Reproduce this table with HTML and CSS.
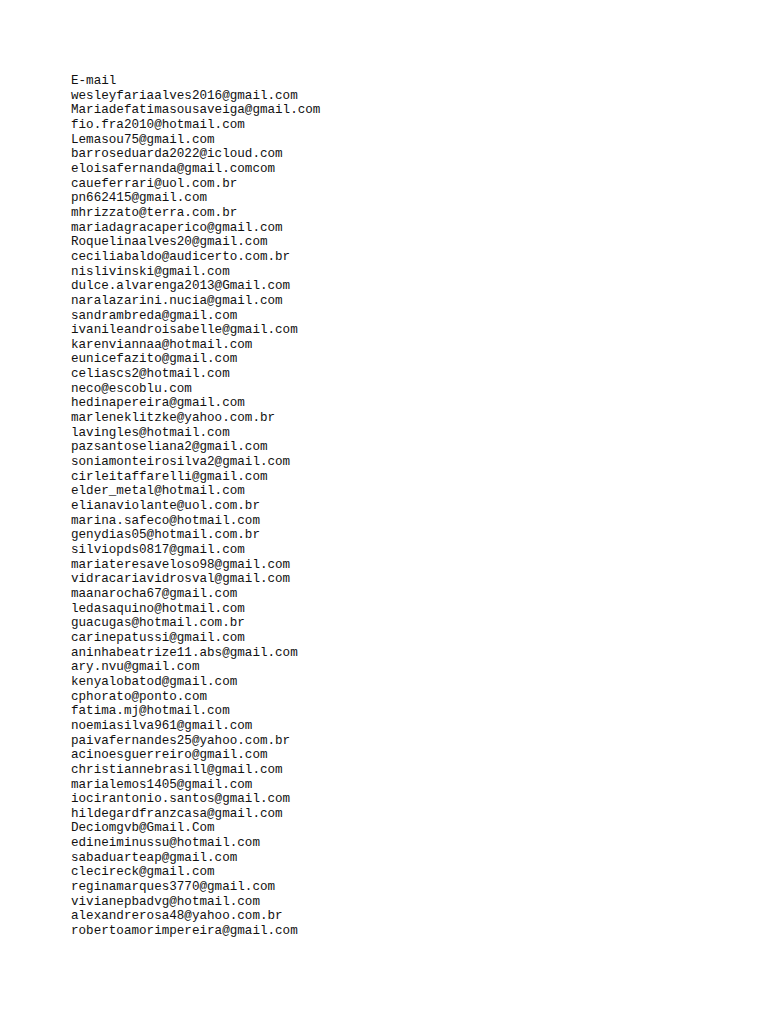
FILE: index.html
```html
<!DOCTYPE html>
<html>
<head>
<meta charset="utf-8">
<link rel="stylesheet" href="styles.css">
</head>
<body>
<div class="page">
<pre class="list">E-mail
wesleyfariaalves2016@gmail.com
Mariadefatimasousaveiga@gmail.com
fio.fra2010@hotmail.com
Lemasou75@gmail.com
barroseduarda2022@icloud.com
eloisafernanda@gmail.comcom
caueferrari@uol.com.br
pn662415@gmail.com
mhrizzato@terra.com.br
mariadagracaperico@gmail.com
Roquelinaalves20@gmail.com
ceciliabaldo@audicerto.com.br
nislivinski@gmail.com
dulce.alvarenga2013@Gmail.com
naralazarini.nucia@gmail.com
sandrambreda@gmail.com
ivanileandroisabelle@gmail.com
karenviannaa@hotmail.com
eunicefazito@gmail.com
celiascs2@hotmail.com
neco@escoblu.com
hedinapereira@gmail.com
marleneklitzke@yahoo.com.br
lavingles@hotmail.com
pazsantoseliana2@gmail.com
soniamonteirosilva2@gmail.com
cirleitaffarelli@gmail.com
elder_metal@hotmail.com
elianaviolante@uol.com.br
marina.safeco@hotmail.com
genydias05@hotmail.com.br
silviopds0817@gmail.com
mariateresaveloso98@gmail.com
vidracariavidrosval@gmail.com
maanarocha67@gmail.com
ledasaquino@hotmail.com
guacugas@hotmail.com.br
carinepatussi@gmail.com
aninhabeatrize11.abs@gmail.com
ary.nvu@gmail.com
kenyalobatod@gmail.com
cphorato@ponto.com
fatima.mj@hotmail.com
noemiasilva961@gmail.com
paivafernandes25@yahoo.com.br
acinoesguerreiro@gmail.com
christiannebrasill@gmail.com
marialemos1405@gmail.com
iocirantonio.santos@gmail.com
hildegardfranzcasa@gmail.com
Deciomgvb@Gmail.Com
edineiminussu@hotmail.com
sabaduarteap@gmail.com
clecireck@gmail.com
reginamarques3770@gmail.com
vivianepbadvg@hotmail.com
alexandrerosa48@yahoo.com.br
robertoamorimpereira@gmail.com</pre>
</div>
</body>
</html>
```

FILE: styles.css
```css
html, body {
  margin: 0;
  padding: 0;
  background: #ffffff;
}
.page {
  padding: 74px 0 0 71px;
}
.list {
  margin: 0;
  font-family: "Liberation Mono", monospace;
  font-size: 12.6px;
  line-height: 14.66px;
  color: #111111;
}
```
